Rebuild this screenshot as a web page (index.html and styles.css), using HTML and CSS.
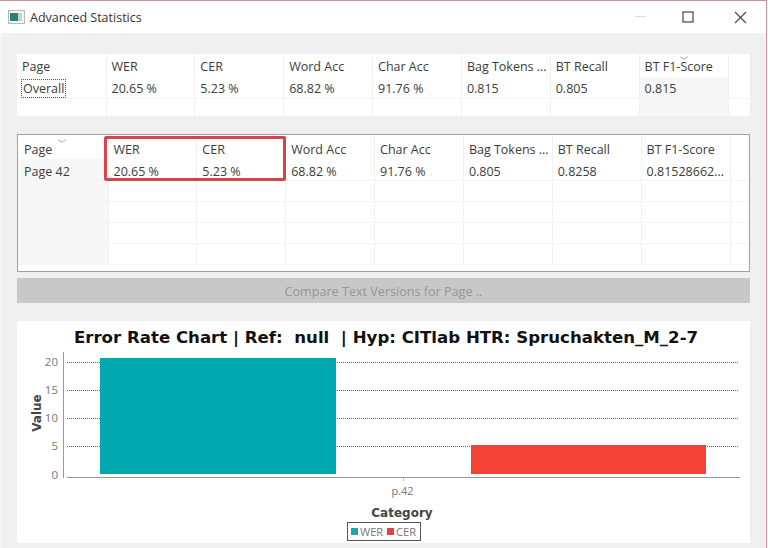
FILE: index.html
```html
<!DOCTYPE html>
<html lang="en">
  <head>
    <meta charset="UTF-8" />
    <meta name="viewport" content="width=device-width, initial-scale=1.0" />
    <title>Advanced Statistics</title>
    <link rel="stylesheet" href="styles.css">
  </head>
  <body>
    <div class="window">
      <!-- Title bar -->
      <div class="titlebar">
        <svg class="app-icon" width="17" height="14" viewBox="0 0 17 14">
          <rect x="0.5" y="0.5" width="16" height="13" fill="#f4f6f6" stroke="#b4bcbc" />
          <rect x="2" y="3" width="8" height="8" fill="#2f7f7a" />
          <rect x="10" y="3" width="4" height="8" fill="#c4d4d2" />
        </svg>
        <span class="window-title">Advanced Statistics</span>
        <div class="controls">
          <svg width="12" height="12" viewBox="0 0 12 12" class="ctl-min">
            <line x1="0" y1="5.5" x2="11" y2="5.5" stroke="#dcdcdc" />
          </svg>
          <svg width="12" height="12" viewBox="0 0 12 12" class="ctl-max">
            <rect x="1" y="1" width="10" height="10" fill="none" stroke="#444" stroke-width="1.2" />
          </svg>
          <svg width="13" height="13" viewBox="0 0 13 13" class="ctl-close">
            <path d="M1 1 L12 12 M12 1 L1 12" fill="none" stroke="#444" stroke-width="1.1" />
          </svg>
        </div>
      </div>

      <div class="content">
        <!-- Overall table -->
        <div class="table-wrap">
          <table class="stats overall">
            <thead>
              <tr>
                <th>Page</th>
                <th>WER</th>
                <th>CER</th>
                <th>Word Acc</th>
                <th>Char Acc</th>
                <th>Bag Tokens ...</th>
                <th>BT Recall</th>
                <th class="sorted">BT F1-Score<span class="chevron chevron-right"></span></th>
                <th></th>
              </tr>
            </thead>
            <tbody>
              <tr>
                <td><span class="focus">Overall</span></td>
                <td>20.65 %</td>
                <td>5.23 %</td>
                <td>68.82 %</td>
                <td>91.76 %</td>
                <td>0.815</td>
                <td>0.805</td>
                <td class="sort-col">0.815</td>
                <td></td>
              </tr>
              <tr class="empty">
                <td></td><td></td><td></td><td></td><td></td><td></td><td></td><td class="sort-col"></td><td></td>
              </tr>
            </tbody>
          </table>
        </div>

        <!-- Per page table -->
        <div class="table-wrap pages-wrap">
          <table class="stats pages">
            <thead>
              <tr>
                <th class="sorted">Page<span class="chevron chevron-left"></span></th>
                <th>WER</th>
                <th>CER</th>
                <th>Word Acc</th>
                <th>Char Acc</th>
                <th>Bag Tokens ...</th>
                <th>BT Recall</th>
                <th>BT F1-Score</th>
                <th></th>
              </tr>
            </thead>
            <tbody>
              <tr>
                <td class="sort-col">Page 42</td>
                <td>20.65 %</td>
                <td>5.23 %</td>
                <td>68.82 %</td>
                <td>91.76 %</td>
                <td>0.805</td>
                <td>0.8258</td>
                <td>0.81528662...</td>
                <td></td>
              </tr>
              <tr class="empty"><td class="sort-col"></td><td></td><td></td><td></td><td></td><td></td><td></td><td></td><td></td></tr>
              <tr class="empty"><td class="sort-col"></td><td></td><td></td><td></td><td></td><td></td><td></td><td></td><td></td></tr>
              <tr class="empty"><td class="sort-col"></td><td></td><td></td><td></td><td></td><td></td><td></td><td></td><td></td></tr>
              <tr class="empty"><td class="sort-col"></td><td></td><td></td><td></td><td></td><td></td><td></td><td></td><td></td></tr>
            </tbody>
          </table>
          <div class="highlight"></div>
        </div>

        <button class="compare" disabled>Compare Text Versions for Page ..</button>

        <!-- Chart -->
        <div class="chart">
          <h2 class="chart-title">Error Rate Chart | Ref:&nbsp; null &nbsp;| Hyp: CITlab HTR: Spruchakten_M_2-7</h2>
          <svg class="plot" width="733" height="150" viewBox="17 350 733 150">
            <g class="grid">
              <line x1="67" y1="362.5" x2="739" y2="362.5" />
              <line x1="67" y1="390.5" x2="739" y2="390.5" />
              <line x1="67" y1="418.5" x2="739" y2="418.5" />
              <line x1="67" y1="446.5" x2="739" y2="446.5" />
            </g>
            <rect x="100" y="358" width="236" height="116" fill="#00a8b0" />
            <rect x="471" y="445" width="235" height="29" fill="#f44336" />
            <line x1="63.5" y1="352" x2="63.5" y2="478" stroke="#999" />
            <line x1="67" y1="477.5" x2="740" y2="477.5" stroke="#999" />
            <line x1="403.5" y1="478" x2="403.5" y2="481" stroke="#bbb" />
            <g class="ticks">
              <text x="58" y="366">20</text>
              <text x="58" y="394">15</text>
              <text x="58" y="422">10</text>
              <text x="58" y="450">5</text>
              <text x="58" y="479">0</text>
            </g>
            <text class="tick-x" x="402.5" y="495">p.42</text>
            <text class="axis-y" transform="translate(41 413) rotate(-90)">Value</text>
          </svg>
          <div class="axis-x">Category</div>
          <div class="legend">
            <span class="swatch swatch-wer"></span><span>WER</span>
            <span class="swatch swatch-cer"></span><span>CER</span>
          </div>
        </div>
      </div>
    </div>
  </body>
</html>
```

FILE: styles.css
```css
html,
body {
  margin: 0;
  height: 100%;
  overflow: hidden;
}
body {
  font-family: "Open Sans", "Noto Sans", sans-serif;
  background-color: #fff;
}
.window {
  height: 547px;
  width: 766px;
  border-top: 1px solid #c9909c;
  border-right: 1px solid #c9909c;
  background-color: #fbf4f2;
  display: flex;
  flex-direction: column;
}
.titlebar {
  height: 32px;
  display: flex;
  align-items: center;
  background-color: #fff;
  padding-left: 8px;
  flex-shrink: 0;
}
.app-icon {
  margin-right: 5px;
}
.window-title {
  font-size: 12.5px;
  color: #333;
}
.controls {
  margin-left: auto;
  display: flex;
  align-items: center;
  margin-right: 19px;
}
.ctl-max {
  margin-left: 35px;
}
.ctl-close {
  margin-left: 40px;
}
.content {
  flex: 1;
  background-color: #f0f0f0;
  margin: 0 2px;
  padding: 21px 14px 0 15px;
  display: flex;
  flex-direction: column;
}
.table-wrap {
  position: relative;
  background-color: #fff;
  flex-shrink: 0;
}
.pages-wrap {
  margin-top: 18px;
  border: 1px solid #a0a0a0;
  padding-top: 1px;
  height: 135px;
}
table.stats {
  border-collapse: collapse;
  table-layout: fixed;
  width: 100%;
  font-size: 12.5px;
  line-height: 15px;
  color: #3c3c3c;
}
.stats th,
.stats td {
  box-sizing: border-box;
  font-weight: normal;
  text-align: left;
  padding: 0 0 0 5px;
  border-right: 1px solid #f1f1f1;
  border-bottom: 1px solid #f4f4f4;
  white-space: nowrap;
  overflow: visible;
  position: relative;
}
.stats th:last-child,
.stats td:last-child {
  border-right: none;
  padding: 0;
}
.overall th:first-child {
  width: 89px;
}
.overall th:last-child {
  width: 22px;
}
.pages th:first-child {
  width: 90px;
}
.pages th:last-child {
  width: 19px;
}
.pages th:first-child,
.pages td:first-child {
  padding-left: 6px;
}
.overall th,
.overall td {
  padding-top: 2px;
}
.pages th,
.pages td {
  padding-top: 4px;
}
.overall th {
  height: 23px;
  border-bottom: none;
}
.overall td {
  height: 21px;
}
.overall tr.empty td {
  height: 18px;
  border-bottom: none;
}
.pages th {
  height: 23px;
  border-bottom: none;
}
.pages td {
  height: 21px;
}
.sort-col {
  background-color: #f7f7f7;
}
.focus {
  outline: 1px dotted #555;
  display: inline-block;
  padding: 1px;
}
.chevron {
  position: absolute;
  width: 5px;
  height: 5px;
  border-right: 1px solid #aaa;
  border-bottom: 1px solid #aaa;
  transform: scaleY(0.6) rotate(45deg);
}
.chevron-right {
  left: 41px;
  top: 0;
}
.chevron-left {
  left: 41px;
  top: 1px;
}
.highlight {
  position: absolute;
  left: 86px;
  top: 1px;
  width: 176px;
  height: 39px;
  border: 3px solid #d6454a;
  border-radius: 2px;
}
.compare {
  margin-top: 6px;
  height: 25px;
  flex-shrink: 0;
  border: none;
  padding: 2px 0 0;
  background-color: #c8c8c8;
  color: #969696;
  font-family: inherit;
  font-size: 12.6px;
}
.chart {
  margin-top: 18px;
  height: 222px;
  background-color: #fff;
  flex-shrink: 0;
  display: flex;
  flex-direction: column;
  align-items: center;
}
.chart-title {
  margin: 0 0 0 5px;
  height: 29px;
  line-height: 34px;
  font-family: "DejaVu Sans", sans-serif;
  font-size: 16.6px;
  font-weight: bold;
  color: #111;
  white-space: nowrap;
}
.plot {
  display: block;
  flex-shrink: 0;
}
.grid line {
  stroke: #666;
  stroke-dasharray: 1 1;
}
.ticks text {
  font-size: 11.5px;
  fill: #777;
  text-anchor: end;
}
.tick-x {
  font-size: 11px;
  fill: #777;
  text-anchor: middle;
}
.axis-y {
  font-family: "DejaVu Sans", sans-serif;
  font-size: 12px;
  font-weight: bold;
  fill: #444;
  text-anchor: middle;
}
.axis-x {
  font-family: "DejaVu Sans", sans-serif;
  font-size: 12px;
  font-weight: bold;
  color: #444;
  margin-top: 5px;
  margin-left: 37px;
  line-height: 16px;
}
.legend {
  margin-top: 1px;
  border: 1px solid #555;
  box-sizing: border-box;
  width: 74px;
  height: 19px;
  font-size: 11px;
  color: #777;
  display: flex;
  align-items: center;
  justify-content: center;
}
.swatch {
  width: 7px;
  height: 7px;
  margin-right: 2px;
}
.swatch-wer {
  background-color: #1aa5a8;
}
.swatch-cer {
  margin-left: 4px;
  background-color: #e0444a;
}
```
